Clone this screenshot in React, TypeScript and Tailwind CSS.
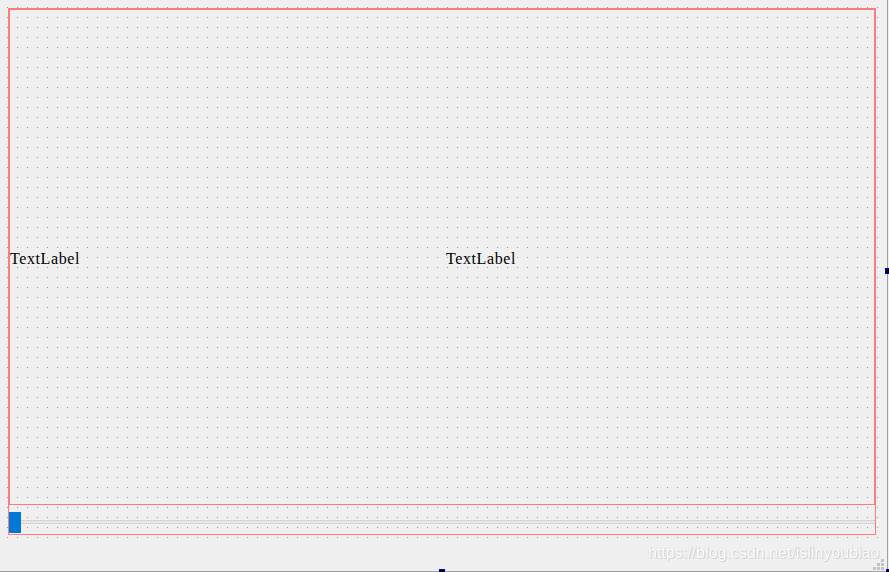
import React from "react";

function DotGrid() {
  return (
    <svg className="absolute left-0 top-0" width="884" height="542" aria-hidden="true">
      <defs>
        <pattern id="dots" x="0" y="0" width="10" height="10" patternUnits="userSpaceOnUse">
          <rect x="7" y="7" width="1" height="1" fill="#9c9c9c" />
        </pattern>
      </defs>
      <rect x="0" y="0" width="884" height="542" fill="url(#dots)" />
    </svg>
  );
}

function SizeGrip() {
  const dots = [
    [881, 561],
    [877, 565],
    [881, 565],
    [873, 569],
    [877, 569],
    [881, 569],
  ];
  return (
    <svg className="absolute left-0 top-0 pointer-events-none" width="889" height="572" aria-hidden="true">
      {dots.map(([x, y], i) => (
        <rect key={i} x={x} y={y - 2} width="3" height="3" fill="#c4c4c4" />
      ))}
    </svg>
  );
}

export default function App() {
  const serif = { fontFamily: '"Liberation Serif", "Times New Roman", serif' };
  return (
    <div className="relative w-[889px] h-[572px] bg-[#f0f0f0] overflow-hidden">
      <div className="relative w-[888px] h-[572px] border-r border-b border-[#a0a0a0] pt-[8px] pl-[8px]">
        <DotGrid />
        <div className="relative flex flex-col w-[868px]">
          <div className="flex items-center h-[497px] border-t-2 border-l-2 border-r-2 border-b border-[#ff7c7c] pt-[3px]">
            <div className="w-[436px] text-[16px] tracking-[0.6px] text-black leading-none" style={serif}>
              TextLabel
            </div>
            <div className="text-[16px] tracking-[0.6px] text-black leading-none" style={serif}>
              TextLabel
            </div>
          </div>
          <div className="flex h-[30px] border-l border-r border-b border-[#ff7c7c]">
            <div className="relative flex items-start w-full pt-[7px]">
              <div className="w-[12px] h-[21px] bg-[#0078d7] shrink-0" />
              <div className="flex-1 mt-[8px] h-[4px] border-t border-b border-[#d4d4d4] bg-[#e8e8e8]" />
            </div>
          </div>
        </div>
      </div>

      <div
        className="absolute left-[648px] top-[545px] text-[16px] text-white leading-none whitespace-nowrap [text-shadow:0_0_1px_#bdbdbd,1px_1px_0_#d6d6d6]"
        style={{ fontFamily: '"Liberation Sans", Arial, sans-serif' }}
      >
        https://blog.csdn.net/islinyoubiao
      </div>

      <SizeGrip />

      <div className="absolute left-[885px] top-[268px] w-[5px] h-[6px] bg-black border border-[#0000d0]" />
      <div className="absolute left-[439px] top-[569px] w-[6px] h-[5px] bg-black border border-[#0000d0]" />
      <div className="absolute left-[886px] top-[569px] w-[5px] h-[5px] bg-black border border-[#0000d0]" />
    </div>
  );
}
